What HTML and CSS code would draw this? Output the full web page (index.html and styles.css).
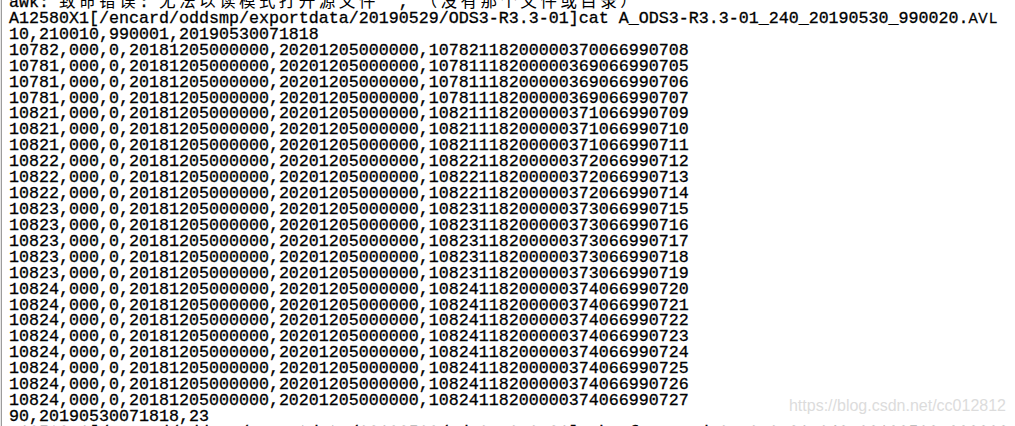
FILE: index.html
```html
<!DOCTYPE html>
<html lang="zh-CN">
<head>
<meta charset="utf-8">
<title>terminal</title>
<link rel="stylesheet" href="styles.css">
</head>
<body>
<div class="term">
<pre class="out">awk: <span class="w">致命错误</span>: <span class="w">无法以读模式打开源文件“</span>,<span class="w">”（没有那个文件或目录）</span>
A12580X1[/encard/oddsmp/exportdata/20190529/ODS3-R3.3-01]cat A_ODS3-R3.3-01_240_20190530_990020.<span class="sm">AVL</span>
10,210010,990001,20190530071818
10782,000,0,20181205000000,20201205000000,10782118200000370066990708
10781,000,0,20181205000000,20201205000000,10781118200000369066990705
10781,000,0,20181205000000,20201205000000,10781118200000369066990706
10781,000,0,20181205000000,20201205000000,10781118200000369066990707
10821,000,0,20181205000000,20201205000000,10821118200000371066990709
10821,000,0,20181205000000,20201205000000,10821118200000371066990710
10821,000,0,20181205000000,20201205000000,10821118200000371066990711
10822,000,0,20181205000000,20201205000000,10822118200000372066990712
10822,000,0,20181205000000,20201205000000,10822118200000372066990713
10822,000,0,20181205000000,20201205000000,10822118200000372066990714
10823,000,0,20181205000000,20201205000000,10823118200000373066990715
10823,000,0,20181205000000,20201205000000,10823118200000373066990716
10823,000,0,20181205000000,20201205000000,10823118200000373066990717
10823,000,0,20181205000000,20201205000000,10823118200000373066990718
10823,000,0,20181205000000,20201205000000,10823118200000373066990719
10824,000,0,20181205000000,20201205000000,10824118200000374066990720
10824,000,0,20181205000000,20201205000000,10824118200000374066990721
10824,000,0,20181205000000,20201205000000,10824118200000374066990722
10824,000,0,20181205000000,20201205000000,10824118200000374066990723
10824,000,0,20181205000000,20201205000000,10824118200000374066990724
10824,000,0,20181205000000,20201205000000,10824118200000374066990725
10824,000,0,20181205000000,20201205000000,10824118200000374066990726
10824,000,0,20181205000000,20201205000000,10824118200000374066990727
90,20190530071818,23
a12580x1[/encard/oddsmp/exportdata/20190529/ods3-r3.3-01]awk -f , a_ods3-r3.3-01_240_20190530_990020.avl</pre>
<div class="mark">https://blog.csdn.net/cc012812</div>
</div>
</body>
</html>
```

FILE: styles.css
```css
html, body {
  margin: 0;
  padding: 0;
  background: #ffffff;
}

.term {
  position: relative;
  width: 1015px;
  height: 426px;
  overflow: hidden;
  box-sizing: border-box;
  border-left: 1px solid #e6e6e6;
  background: #ffffff;
}

.term::before {
  content: "";
  position: absolute;
  left: 0;
  top: 0;
  bottom: 0;
  width: 1px;
  background: #9c9c9c;
}

.out {
  margin: -7px 0 0 0;
  padding: 0 0 0 8px;
  font-family: "Liberation Mono", "DejaVu Sans Mono", monospace;
  font-size: 16.667px;
  line-height: 15.92px;
  color: #000000;
  white-space: pre;
  -webkit-text-stroke: 0.3px #000000;
}

.w {
  font-family: "Noto Sans CJK SC", "Liberation Mono", sans-serif;
  letter-spacing: 3.33px;
  -webkit-text-stroke: 0;
}

.sm {
  font-family: "Liberation Sans", sans-serif;
  font-size: 14px;
  letter-spacing: 1.5px;
}

.mark {
  position: absolute;
  right: 9px;
  bottom: 11px;
  font-family: "Liberation Sans", Arial, sans-serif;
  font-size: 16px;
  line-height: 18px;
  color: #dcdcdc;
  text-shadow: 0 0 1px #ffffff;
}
```
